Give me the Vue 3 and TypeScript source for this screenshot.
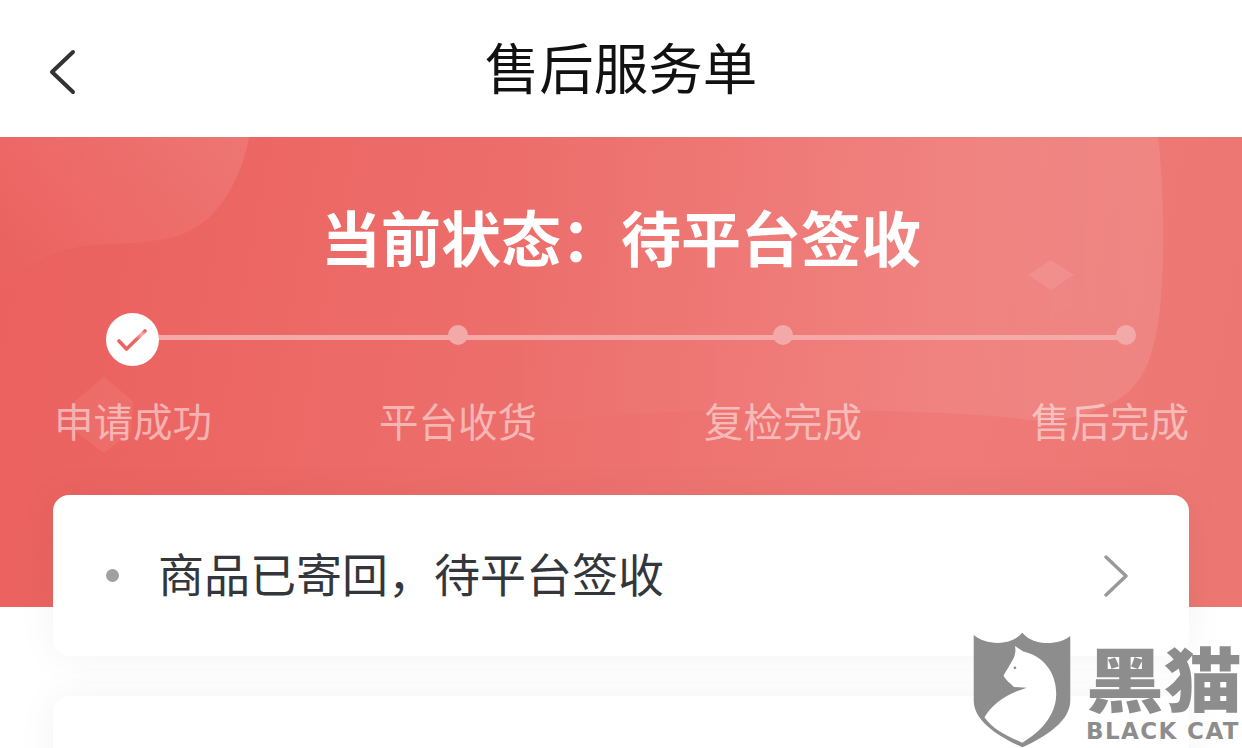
<script setup lang="ts">
interface Step { label: string; done: boolean }
const steps: Step[] = [
  { label: '申请成功', done: true },
  { label: '平台收货', done: false },
  { label: '复检完成', done: false },
  { label: '售后完成', done: false },
]
</script>

<template>
  <div class="page">
    <header class="nav">
      <svg class="back" width="30" height="46" viewBox="0 0 30 46" fill="none">
        <path d="M24 3 L3 23 L24 43" stroke="#333" stroke-width="4" stroke-linecap="round" stroke-linejoin="round" />
      </svg>
      <h1 class="nav-title">售后服务单</h1>
    </header>

    <section class="banner">
      <svg class="banner-art" width="1242" height="470" viewBox="0 0 1242 470" fill="none">
        <defs>
          <linearGradient id="bigBlob" x1="0" y1="0" x2="1" y2="0">
            <stop offset="0" stop-color="#fff" stop-opacity="0" />
            <stop offset="1" stop-color="#fff" stop-opacity="0.1" />
          </linearGradient>
          <linearGradient id="cornerBlob" x1="0" y1="1" x2="1" y2="0">
            <stop offset="0" stop-color="#fff" stop-opacity="0" />
            <stop offset="1" stop-color="#fff" stop-opacity="0.1" />
          </linearGradient>
          <linearGradient id="checkStroke" x1="0" y1="1" x2="1" y2="0">
            <stop offset="0" stop-color="#ec6461" />
            <stop offset="0.6" stop-color="#ec6461" />
            <stop offset="0.85" stop-color="#f6b3b1" />
            <stop offset="1" stop-color="#ec6461" />
          </linearGradient>
        </defs>
        <path d="M249 0 C244 30 228 65 206 83 C190 96 175 101 158 103 C130 108 105 106 79 110 C55 114 38 122 24 133 C12 144 4 154 0 163 L0 0 Z" fill="url(#cornerBlob)" />
        <path d="M500 0 L1158 0 C1163 40 1165 110 1161 160 C1158 195 1153 212 1148 226 C1138 248 1125 260 1112 266 C1085 280 1055 286 1029 283 C1000 279 970 277 938 276 C800 270 650 270 500 290 Z" fill="url(#bigBlob)" />
        <path d="M1051 123 L1074 138 L1051 153 L1028 138 Z" fill="#fff" fill-opacity="0.09" />
        <path d="M1050 153 L1072 140 L1072 170 L1050 184 Z" fill="#fff" fill-opacity="0.025" />
        <path d="M104 240 L133 264 L131 295 L104 316 L76 295 L75 264 Z" fill="#fff" fill-opacity="0.06" />
      </svg>

      <h2 class="status">当前状态：待平台签收</h2>

      <div class="steps">
        <div class="track"></div>
        <div v-for="step in steps" :key="step.label" class="step">
          <div class="marker">
            <span v-if="step.done" class="check">
              <svg width="30" height="22" viewBox="0 0 30 22" fill="none">
                <path d="M2 12 L9.5 20 L28 2" stroke="url(#checkStroke)" stroke-width="3.6" stroke-linecap="round" stroke-linejoin="round" />
              </svg>
            </span>
            <span v-else class="dot"></span>
          </div>
          <div class="step-label">{{ step.label }}</div>
        </div>
      </div>
    </section>

    <div class="cards">
      <div class="card notice">
        <span class="bullet"></span>
        <span class="notice-text">商品已寄回，待平台签收</span>
        <svg class="more" width="26" height="42" viewBox="0 0 26 42" fill="none">
          <path d="M3 2 L23 21 L3 40" stroke="#999" stroke-width="3.4" stroke-linecap="round" stroke-linejoin="round" />
        </svg>
      </div>
      <div class="card next"></div>
    </div>

    <div class="watermark">
      <svg class="shield" width="98" height="116" viewBox="68 96 292 346">
        <path d="M70 105 C105 135 180 140 215 98 C250 140 325 135 358 108 L358 300 C358 360 290 405 215 440 C140 405 70 360 70 300 Z" fill="#8d8d8d" />
        <path d="M193 138 L218 154 C280 168 318 220 316 285 C314 345 270 395 215 426 C170 406 125 385 102 350 C125 312 165 282 228 262 L190 260 C180 250 165 240 159 226 C168 210 178 195 190 172 C194 160 196 150 193 138 Z" fill="#fff" />
        <circle cx="193" cy="203" r="4" fill="#8d8d8d" />
      </svg>
      <div class="brand">
        <div class="brand-cn">黑猫</div>
        <div class="brand-en">BLACK CAT</div>
      </div>
    </div>
  </div>
</template>

<style>
html, body { margin: 0; padding: 0; background: #fff; }
</style>

<style scoped>
.page {
  position: relative;
  width: 1242px;
  height: 748px;
  overflow: hidden;
  background: #fff;
  font-family: "Noto Sans CJK SC", "Liberation Sans", sans-serif;
}
.nav {
  position: relative;
  height: 137px;
  display: flex;
  align-items: flex-start;
  justify-content: center;
}
.back {
  position: absolute;
  left: 49px;
  top: 49px;
}
.nav-title {
  margin: 0;
  padding-top: 32px;
  font-size: 54.5px;
  line-height: 68px;
  font-weight: 400;
  color: #111;
}
.banner {
  position: relative;
  height: 470px;
  overflow: hidden;
  background: linear-gradient(100deg, #eb605e 0%, #ec6c69 35%, #ef7a77 75%, #ec7672 100%);
}
.banner-art {
  position: absolute;
  left: 0;
  top: 0;
}
.status {
  position: relative;
  margin: 0;
  padding-top: 61px;
  text-align: center;
  font-size: 60px;
  line-height: 76px;
  font-weight: 700;
  color: #fff;
  white-space: nowrap;
}
.steps {
  position: relative;
  display: flex;
  margin-top: 39px;
  padding-left: 53px;
}
.track {
  position: absolute;
  left: 159px;
  width: 967px;
  top: 22px;
  height: 5px;
  background: #f5a9a9;
}
.step {
  position: relative;
  width: 160px;
  margin-right: 165px;
  display: flex;
  flex-direction: column;
  align-items: center;
}
.step:last-child {
  margin-left: 2px;
  margin-right: 0;
}
.marker {
  width: 100%;
  height: 53px;
  display: flex;
  justify-content: center;
  align-items: flex-start;
}
.step:last-child .marker {
  transform: translateX(16px);
}
.check {
  width: 53px;
  height: 53px;
  margin-right: 2px;
  border-radius: 50%;
  background: #fff;
  display: flex;
  align-items: center;
  justify-content: center;
}
.dot {
  width: 20px;
  height: 20px;
  margin-top: 12px;
  border-radius: 50%;
  background: #f4a9a9;
}
.step-label {
  margin-top: 26px;
  font-size: 39.5px;
  line-height: 56px;
  color: rgba(255, 255, 255, 0.5);
  white-space: nowrap;
}
.cards {
  position: absolute;
  left: 53px;
  top: 495px;
  width: 1136px;
  display: flex;
  flex-direction: column;
  gap: 40px;
}
.card {
  background: #fff;
  border-radius: 16px;
  box-shadow: 0 0 40px rgba(0, 0, 0, 0.05);
}
.notice {
  height: 161px;
  display: flex;
  align-items: center;
  padding: 0 60px 0 53px;
  box-sizing: border-box;
}
.bullet {
  width: 13px;
  height: 13px;
  border-radius: 50%;
  background: #a0a0a0;
  flex: none;
}
.notice-text {
  margin-left: 39px;
  margin-bottom: 7px;
  flex: 1;
  font-size: 46px;
  line-height: 60px;
  color: #33363b;
  white-space: nowrap;
}
.next {
  height: 120px;
}
.watermark {
  position: absolute;
  left: 973px;
  top: 632px;
  display: flex;
  gap: 15px;
}
.shield {
  flex: none;
  display: block;
}
.brand {
  width: 156px;
  color: #8d8d8d;
}
.brand-cn {
  margin-top: 4px;
  font-size: 78px;
  line-height: 80px;
  font-weight: 900;
  white-space: nowrap;
  transform: scaleY(0.9);
}
.brand-en {
  font-family: "DejaVu Sans", sans-serif;
  margin-top: 2px;
  font-size: 23px;
  line-height: 26px;
  font-weight: 700;
  letter-spacing: 1.4px;
  white-space: nowrap;
}
</style>
